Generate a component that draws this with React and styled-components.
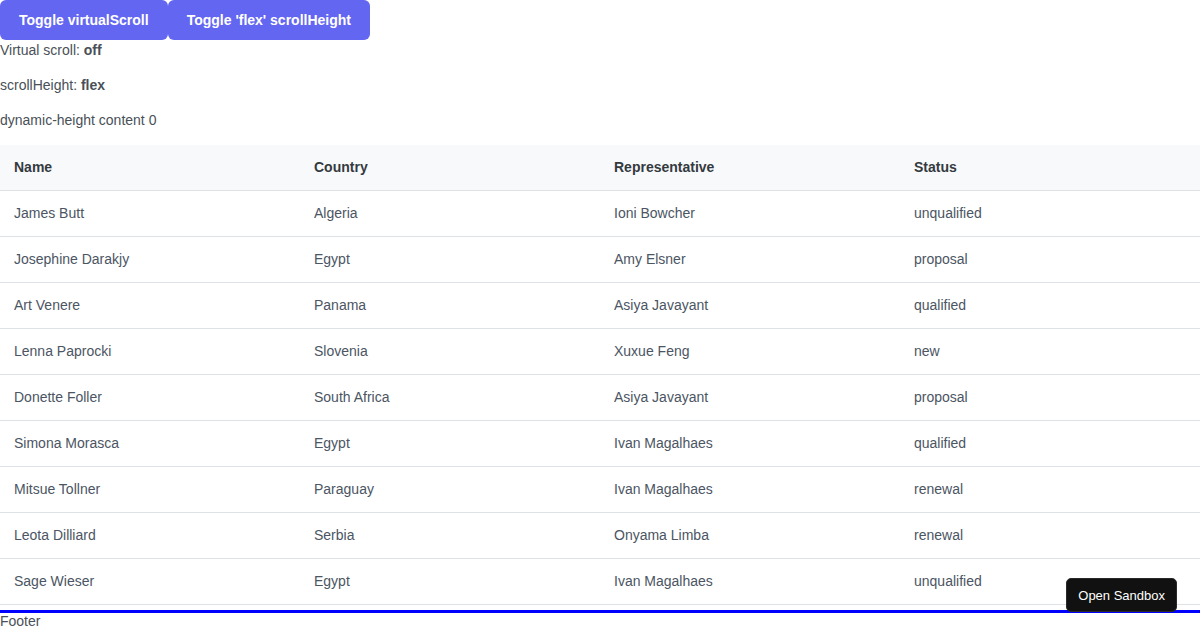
import styled, { createGlobalStyle } from "styled-components";

const GlobalStyle = createGlobalStyle`
  html, body {
    margin: 0;
    padding: 0;
    background: #ffffff;
    font-family: "Liberation Sans", Arial, sans-serif;
    color: #495057;
  }
`;

const Page = styled.div`
  height: 100vh;
  display: flex;
  flex-direction: column;
  overflow: hidden;
`;

const Toolbar = styled.div`
  display: flex;
`;

const ToggleButton = styled.button`
  height: 40px;
  padding: 0 19px;
  background: #6366f1;
  color: #ffffff;
  border: none;
  border-radius: 6px;
  font-family: "Liberation Sans", Arial, sans-serif;
  font-size: 14px;
  font-weight: 700;
  cursor: pointer;
`;

const Info = styled.p`
  margin: 0 0 15px;
  font-size: 14px;
  line-height: 20px;
`;

const ScrollArea = styled.div`
  flex: 1;
  min-height: 0;
  overflow: hidden;
`;

const Table = styled.table`
  width: 100%;
  border-collapse: collapse;
  table-layout: fixed;
  font-size: 14px;
`;

const HeadCell = styled.th`
  text-align: left;
  padding: 14px;
  line-height: 17px;
  background: #f8f9fa;
  color: #343a40;
  font-weight: 700;
  border-bottom: 1px solid #dee2e6;
`;

const Cell = styled.td`
  padding: 14px;
  line-height: 17px;
  color: #4b5563;
  border-bottom: 1px solid #dee2e6;
`;

const Footer = styled.div`
  border-top: 3px solid #0000ff;
  font-size: 14px;
  line-height: 17px;
  height: 17px;
  flex-shrink: 0;
`;

const SandboxButton = styled.button`
  position: fixed;
  right: 23px;
  bottom: 18px;
  padding: 0 11px;
  height: 34px;
  background: #111111;
  color: #ffffff;
  border: 1px solid #2a2a2a;
  border-radius: 5px;
  font-family: "Liberation Sans", Arial, sans-serif;
  font-size: 13px;
`;

const customers = [
  ["James Butt", "Algeria", "Ioni Bowcher", "unqualified"],
  ["Josephine Darakjy", "Egypt", "Amy Elsner", "proposal"],
  ["Art Venere", "Panama", "Asiya Javayant", "qualified"],
  ["Lenna Paprocki", "Slovenia", "Xuxue Feng", "new"],
  ["Donette Foller", "South Africa", "Asiya Javayant", "proposal"],
  ["Simona Morasca", "Egypt", "Ivan Magalhaes", "qualified"],
  ["Mitsue Tollner", "Paraguay", "Ivan Magalhaes", "renewal"],
  ["Leota Dilliard", "Serbia", "Onyama Limba", "renewal"],
  ["Sage Wieser", "Egypt", "Ivan Magalhaes", "unqualified"],
];

export default function App() {
  return (
    <Page>
      <GlobalStyle />
      <Toolbar>
        <ToggleButton>Toggle virtualScroll</ToggleButton>
        <ToggleButton>Toggle 'flex' scrollHeight</ToggleButton>
      </Toolbar>
      <Info>
        Virtual scroll: <b>off</b>
      </Info>
      <Info>
        scrollHeight: <b>flex</b>
      </Info>
      <Info>dynamic-height content 0</Info>
      <ScrollArea>
        <Table>
          <thead>
            <tr>
              <HeadCell>Name</HeadCell>
              <HeadCell>Country</HeadCell>
              <HeadCell>Representative</HeadCell>
              <HeadCell>Status</HeadCell>
            </tr>
          </thead>
          <tbody>
            {customers.map((c) => (
              <tr key={c[0]}>
                {c.map((v, i) => (
                  <Cell key={i}>{v}</Cell>
                ))}
              </tr>
            ))}
          </tbody>
        </Table>
      </ScrollArea>
      <Footer>Footer</Footer>
      <SandboxButton>Open Sandbox</SandboxButton>
    </Page>
  );
}
